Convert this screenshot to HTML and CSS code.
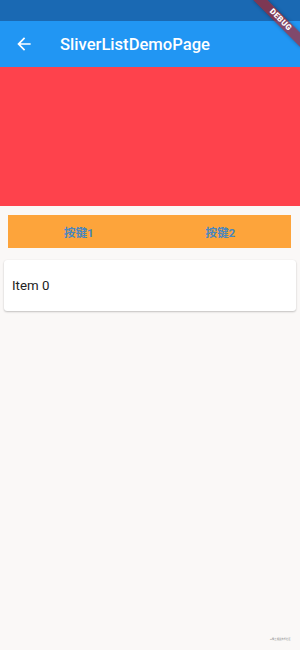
FILE: index.html
```html
<!DOCTYPE html>
<html>
<head>
<meta charset="utf-8">
<link rel="stylesheet" href="styles.css">
</head>
<body>
<div class="screen">
  <div class="status"></div>
  <header class="appbar">
    <svg class="back" width="20" height="20" viewBox="0 0 24 24"><path d="M20 11H7.83l5.59-5.59L12 4l-8 8 8 8 1.41-1.41L7.83 13H20v-2z" fill="#fff"/></svg>
    <h1 class="title">SliverListDemoPage</h1>
  </header>
  <div class="hero"></div>
  <div class="buttons">
    <button class="btn">按键1</button>
    <button class="btn">按键2</button>
  </div>
  <div class="card">
    <span class="item">Item 0</span>
  </div>
  <div class="banner">DEBUG</div>
  <div class="watermark">@稀土掘金技术社区</div>
</div>
</body>
</html>
```
FILE: styles.css
```css
html, body {
  margin: 0;
  padding: 0;
}
body {
  background: #faf8f7;
  font-family: Roboto, "Noto Sans CJK SC", sans-serif;
}
.screen {
  position: relative;
  width: 300px;
  height: 650px;
  overflow: hidden;
  background: #faf8f7;
  display: flex;
  flex-direction: column;
}
.status {
  height: 21px;
  background: #1a69b3;
  flex: none;
}
.appbar {
  height: 46px;
  flex: none;
  background: #2196f3;
  display: flex;
  align-items: center;
  padding-left: 14px;
  box-sizing: border-box;
}
.back {
  display: block;
  flex: none;
}
.title {
  margin: 0 0 0 26px;
  font-size: 16.6px;
  font-weight: 500;
  color: #fff;
}
.hero {
  height: 139px;
  flex: none;
  background: #fe424c;
}
.buttons {
  margin: 9px 9px 0 8px;
  height: 33px;
  flex: none;
  background: #fda43b;
  display: flex;
}
.btn {
  flex: 1;
  border: none;
  background: transparent;
  font-family: Roboto, "Noto Sans CJK SC", sans-serif;
  font-size: 11.7px;
  font-weight: 700;
  color: #4a86bf;
  padding: 0;
}
.card {
  margin: 12px 4px 0 4px;
  height: 51px;
  flex: none;
  background: #fff;
  border-radius: 3px;
  box-shadow: 0 1px 2px rgba(0,0,0,0.22), 0 0 1px rgba(0,0,0,0.08);
  display: flex;
  align-items: center;
  padding-left: 8px;
}
.item {
  font-size: 13.3px;
  color: #222;
}
.banner {
  position: absolute;
  left: 246.7px;
  top: 15px;
  width: 66.7px;
  height: 10px;
  line-height: 10px;
  transform: rotate(45deg);
  background: rgba(183, 28, 28, 0.63);
  color: #fff;
  font-size: 8px;
  font-weight: 900;
  letter-spacing: 0.3px;
  text-align: center;
  box-shadow: 0 0 4px rgba(0,0,0,0.3);
}
.watermark {
  position: absolute;
  left: 270px;
  top: 637px;
  font-size: 2.3px;
  color: #888;
  white-space: nowrap;
}
```
